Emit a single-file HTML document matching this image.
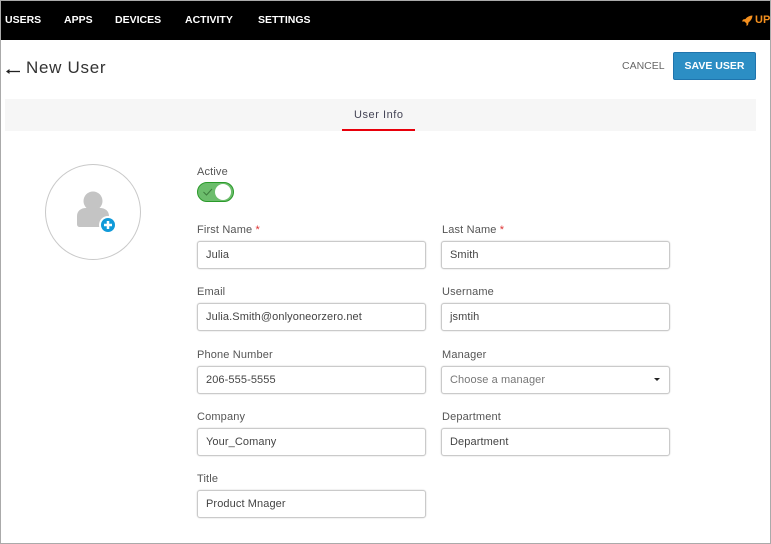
<!DOCTYPE html>
<html><head><meta charset="utf-8"><style>
html,body{margin:0;padding:0;background:#fff}
#p{position:relative;width:771px;height:544px;overflow:hidden;background:#fff;font-family:"Liberation Sans",sans-serif;color:#444}
#p>*{position:absolute;box-sizing:border-box}
.n{top:13px;color:#fff;font-weight:bold;font-size:10.5px;line-height:14px;white-space:nowrap}
.l{font-size:11px;line-height:14px;color:#555;letter-spacing:.15px;white-space:nowrap}
.i{height:28px;width:229px;border:1px solid #cacaca;border-radius:3px;box-shadow:0 0 1.5px #ccc;font-size:11px;line-height:26px;padding-left:8px;color:#444;letter-spacing:.1px;white-space:nowrap;background:#fff}
.r{color:#d33}
</style></head><body><div id="p">
<div style="left:0;top:0;width:771px;height:40px;background:#000"></div>
<div style="left:0;top:0;width:771px;height:1px;background:#aaa"></div>
<div style="left:0;top:0;width:1px;height:544px;background:#aaa"></div>
<div style="left:770px;top:0;width:1px;height:544px;background:#aaa"></div>
<div style="left:0;top:543px;width:771px;height:1px;background:#aaa"></div>
<div class="n" style="left:5px">USERS</div>
<div class="n" style="left:64px">APPS</div>
<div class="n" style="left:115px">DEVICES</div>
<div class="n" style="left:185px">ACTIVITY</div>
<div class="n" style="left:258px">SETTINGS</div>
<svg style="left:742px;top:15px" width="11" height="11" viewBox="0 0 11 11"><path d="M10.500.5C7 .8 5 2 3.500 4L1 4.500 0 6.500l2.500 0 2 2 0 2.500 1.500-1 .5-2.500C8.500 6 10.200 4 10.500.5z" fill="#f5901e"/></svg>
<div class="n" style="left:755px;color:#f5901e;font-size:11px">UP</div>
<svg style="left:5px;top:66px" width="16" height="10" viewBox="0 0 16 10"><path d="M3 5.500H15" stroke="#222" stroke-width="1.300" fill="none"/><path d="M1 5.500L4.500 3V8z" fill="#222"/></svg>
<div style="left:26px;top:58px;font-size:17px;line-height:20px;color:#333;letter-spacing:.7px;white-space:nowrap">New User</div>
<div style="left:622px;top:59px;font-size:10.5px;line-height:14px;color:#666;white-space:nowrap">CANCEL</div>
<div style="left:673px;top:52px;width:83px;height:28px;background:#2c8ec4;border:1px solid #1f74ad;border-radius:2px;color:#fff;font-weight:bold;font-size:10.5px;line-height:26px;text-align:center">SAVE USER</div>
<div style="left:5px;top:99px;width:751px;height:32px;background:#f6f6f6"></div>
<div style="left:354px;top:107.500px;font-size:11px;line-height:14px;color:#445;letter-spacing:.55px;white-space:nowrap">User Info</div>
<div style="left:342px;top:129px;width:73px;height:2px;background:#e8000b"></div>
<div style="left:45px;top:164px;width:96px;height:96px;border:1px solid #c9c9c9;border-radius:50%"></div>
<svg style="left:76px;top:190px" width="42" height="44" viewBox="0 0 42 44"><circle cx="17" cy="11" r="9.500" fill="#c4c4c4"/><path d="M1 34V26C1 21 5 18 10 18H24C29 18 33 21 33 26V37H4C2 37 1 36 1 34z" fill="#c4c4c4"/><circle cx="32" cy="35" r="9" fill="#fff"/><circle cx="32" cy="35" r="7" fill="#109ad9"/><path d="M32 31V39M28 35H36" stroke="#fff" stroke-width="2.500"/></svg>
<div class="l" style="left:197px;top:165px">Active</div>
<div style="left:197px;top:182px;width:37px;height:20px;background:#6cbd6c;border:1.500px solid #2a9a2a;border-radius:10px"></div>
<div style="left:215px;top:184px;width:16px;height:16px;background:#fff;border-radius:50%"></div>
<svg style="left:202px;top:187px" width="12" height="10" viewBox="0 0 12 10"><path d="M1.500 5L4.500 8 10 2" stroke="#3d7d3d" stroke-width="1" fill="none"/></svg>
<div class="l" style="left:197px;top:223px">First Name <span class="r">*</span></div>
<div class="i" style="left:197px;top:241px">Julia</div>
<div class="l" style="left:442px;top:223px">Last Name <span class="r">*</span></div>
<div class="i" style="left:441px;top:241px">Smith</div>
<div class="l" style="left:197px;top:285px">Email</div>
<div class="i" style="left:197px;top:303px">Julia.Smith@onlyoneorzero.net</div>
<div class="l" style="left:442px;top:285px">Username</div>
<div class="i" style="left:441px;top:303px">jsmtih</div>
<div class="l" style="left:197px;top:348px">Phone Number</div>
<div class="i" style="left:197px;top:366px">206-555-5555</div>
<div class="l" style="left:442px;top:348px">Manager</div>
<div class="i" style="left:441px;top:366px;color:#777">Choose a manager</div>
<div style="left:654px;top:378px;width:0;height:0;border-left:3.500px solid transparent;border-right:3.500px solid transparent;border-top:3.500px solid #222"></div>
<div class="l" style="left:197px;top:410px">Company</div>
<div class="i" style="left:197px;top:428px">Your_Comany</div>
<div class="l" style="left:442px;top:410px">Department</div>
<div class="i" style="left:441px;top:428px">Department</div>
<div class="l" style="left:197px;top:472px">Title</div>
<div class="i" style="left:197px;top:490px;line-height:27px">Product Mnager</div>
</div></body></html>
